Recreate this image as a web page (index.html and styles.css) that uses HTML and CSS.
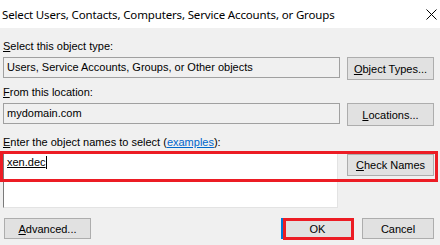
FILE: index.html
```html
<!DOCTYPE html>
<html lang="en">
<head>
    <meta charset="UTF-8">
    <title>Select Users, Contacts, Computers, Service Accounts, or Groups</title>
    <link rel="stylesheet" href="styles.css">
</head>
<body>
    <div class="dialog">
        <div class="titlebar">
            <span class="title">Select Users, Contacts, Computers, Service Accounts, or Groups</span>
            <svg class="close" width="11" height="11" viewBox="0 0 11 11">
                <path d="M0.5 0.5 L10.5 10.5 M10.5 0.5 L0.5 10.5" stroke="#000" stroke-width="1" fill="none"/>
            </svg>
        </div>

        <div class="content">
            <div class="label label-first"><u>S</u>elect this object type:</div>
            <div class="row">
                <div class="field">Users, Service Accounts, Groups, or Other objects</div>
                <button class="button"><u>O</u>bject Types...</button>
            </div>

            <div class="label"><u>F</u>rom this location:</div>
            <div class="row">
                <div class="field">mydomain.com</div>
                <button class="button"><u>L</u>ocations...</button>
            </div>

            <div class="label label-names"><u>E</u>nter the object names to select (<a href="#" class="link">examples</a>):</div>
            <div class="row row-names">
                <div class="names"><u>xen.dec</u><span class="caret"></span></div>
                <button class="button button-check"><u>C</u>heck Names</button>
            </div>

            <div class="footer">
                <button class="button button-advanced"><u>A</u>dvanced...</button>
                <div class="actions">
                    <button class="button button-ok">OK</button>
                    <button class="button button-cancel">Cancel</button>
                </div>
            </div>
        </div>

        <!-- annotation boxes -->
        <div class="mark mark-names"></div>
        <div class="mark mark-ok"></div>
    </div>
</body>
</html>
```

FILE: styles.css
```css
body {
    margin: 0;
    font-family: "Liberation Sans", Arial, sans-serif;
    font-size: 11px;
    color: #000;
    background-color: #f0f0f0;
}
.dialog {
    position: relative;
    width: 440px;
    height: 245px;
    overflow: hidden;
    background-color: #f0f0f0;
}
.titlebar {
    height: 28px;
    background-color: #fff;
    display: flex;
    align-items: center;
    justify-content: space-between;
    padding: 0 3px 0 2px;
}
.title {
    font-family: "Noto Sans", "Open Sans", sans-serif;
    font-size: 11.5px;
    letter-spacing: -0.15px;
}
.close {
    margin-right: 0;
}
.content {
    padding: 0 6px 0 3px;
}
.label {
    height: 13px;
    line-height: 13px;
    margin-top: 6px;
    margin-bottom: 4px;
}
.label-first {
    margin-top: 12px;
}
.label-names {
    margin-top: 10px;
}
.link {
    color: #0066cc;
}
.row {
    display: flex;
    align-items: flex-start;
    gap: 7px;
    height: 23px;
}
.field {
    box-sizing: border-box;
    width: 337px;
    height: 21px;
    line-height: 19px;
    padding: 0 3px;
    border: 1px solid #a0a0a0;
    background-color: #f0f0f0;
    white-space: nowrap;
}
.button {
    box-sizing: border-box;
    width: 87px;
    height: 23px;
    padding: 0;
    font-family: inherit;
    font-size: 11px;
    color: #000;
    background-color: #e1e1e1;
    border: 1px solid #adadad;
}
.row-names {
    height: 55px;
}
.names {
    box-sizing: border-box;
    width: 335px;
    height: 55px;
    padding: 2px 3px;
    line-height: 13px;
    background-color: #fff;
    border: 1px solid #e3e3e3;
    border-top-color: #7a7a7a;
    border-left-color: #7a7a7a;
}
.caret {
    display: inline-block;
    width: 1px;
    height: 13px;
    vertical-align: top;
    background-color: #000;
}
.button-check {
    margin-left: 2px;
    margin-top: 1px;
    height: 22px;
}
.footer {
    display: flex;
    justify-content: space-between;
    margin-top: 10px;
    padding-left: 1px;
}
.actions {
    display: flex;
    gap: 9px;
}
.button-advanced,
.button-ok,
.button-cancel {
    height: 21px;
}
.button-ok {
    width: 72px;
    border: 2px solid #0078d7;
    border-right-width: 1px;
    border-bottom-width: 1px;
}
.button-cancel {
    width: 72px;
}
.mark {
    position: absolute;
    box-sizing: border-box;
    border: 3px solid #ec1c24;
}
.mark-names {
    left: 0;
    top: 151px;
    width: 438px;
    height: 31px;
}
.mark-ok {
    left: 283px;
    top: 218px;
    width: 71px;
    height: 22px;
}
```
